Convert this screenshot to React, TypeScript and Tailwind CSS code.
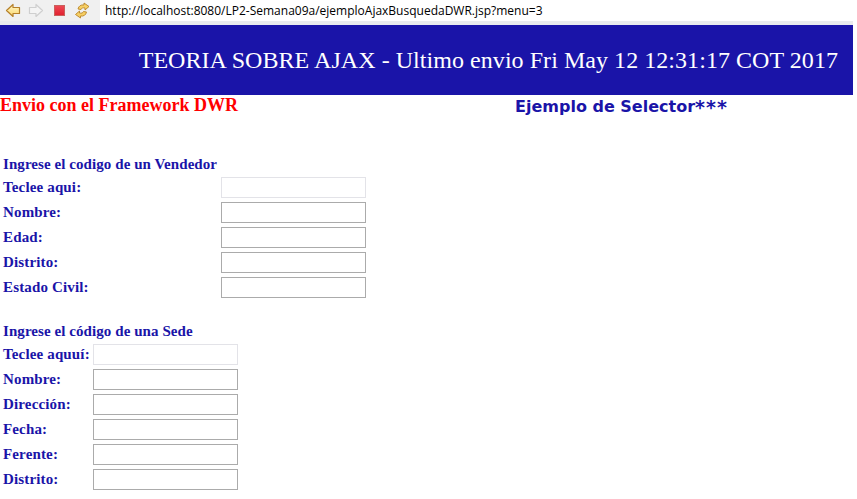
const serif = "font-['Liberation_Serif',serif]";

const vendedor = ["Teclee aqui:", "Nombre:", "Edad:", "Distrito:", "Estado Civil:"];
const sede = ["Teclee aquuí:", "Nombre:", "Dirección:", "Fecha:", "Ferente:", "Distrito:"];

function Toolbar() {
  return (
    <div className="flex h-[25px] items-start bg-[#f0f0f0] border-b-[4px] border-[#e9ebee]">
      <div className="flex h-[21px] w-[100px] items-center">
        <svg width="100" height="21" viewBox="0 0 100 21">
          <defs>
            <linearGradient id="back" x1="0" y1="0" x2="0" y2="1">
              <stop offset="0" stopColor="#fff6c8" />
              <stop offset="1" stopColor="#fbd86e" />
            </linearGradient>
            <linearGradient id="stop" x1="0" y1="0" x2="0" y2="1">
              <stop offset="0" stopColor="#ee4a55" />
              <stop offset="1" stopColor="#e0202e" />
            </linearGradient>
          </defs>
          <path d="M6.5 10.5 L13 4.5 V7.5 H19.5 V13.5 H13 V16.5 Z" fill="url(#back)" stroke="#b5802a" strokeWidth="1.2" strokeLinejoin="round" />
          <path d="M42.5 10.5 L36 4.5 V7.5 H29.5 V13.5 H36 V16.5 Z" fill="#f4f4f4" stroke="#cfcfcf" strokeWidth="1.2" strokeLinejoin="round" />
          <rect x="54.5" y="5.5" width="10" height="10" fill="url(#stop)" stroke="#c9605c" />
          <path d="M78 9 C78.5 6 81 4.5 84 5 L84 3 L89 6.5 L85 10 L85 8 C83 7.5 81.5 8 81 9.5 Z" fill="#f7cf63" stroke="#b98628" strokeWidth="0.9" strokeLinejoin="round" />
          <path d="M86.5 12 C86 15 83.5 16.5 80.5 16 L80.5 18 L75.5 14.5 L79.5 11 L79.5 13 C81.5 13.5 83 13 83.5 11.5 Z" fill="#f7cf63" stroke="#b98628" strokeWidth="0.9" strokeLinejoin="round" />
        </svg>
      </div>
      <div className="flex h-[21px] w-[753px] items-center bg-white pl-[5px] font-['Open_Sans',sans-serif] text-[12px] text-black">
        http://localhost:8080/LP2-Semana09a/ejemploAjaxBusquedaDWR.jsp?menu=3
      </div>
    </div>
  );
}

function Row({ label, labelWidth, first }: { label: string; labelWidth: string; first: boolean }) {
  return (
    <div className="flex h-[25px] items-center">
      <span className={`${labelWidth} pl-[3px] text-[15px] font-bold tracking-[0.15px] text-[#1a14a8]`}>{label}</span>
      <input
        type="text"
        readOnly
        className={`h-[21px] w-[145px] border bg-white ${first ? "border-[#e3e3e8]" : "border-[#ababab]"}`}
      />
    </div>
  );
}

export default function App() {
  return (
    <div className={`h-[499px] w-[857px] overflow-hidden bg-white ${serif}`}>
      <div className="w-[853px]">
        <Toolbar />
        <div className="flex h-[70px] items-center justify-end bg-[#1a14a8] pr-[15px] text-[24px] tracking-[0.05px] text-white">
          TEORIA SOBRE AJAX - Ultimo envio Fri May 12 12:31:17 COT 2017
        </div>
        <div className="flex h-[21px] items-center">
          <span className="mb-[2px] w-[515px] text-[18px] font-bold leading-none text-[#ff0000]">Envio con el Framework DWR</span>
          <span className="mt-[3px] font-['DejaVu_Sans',sans-serif] text-[16px] font-bold leading-none text-[#1a14a8]">
            Ejemplo de Selector<span className="align-[-2px] text-[19px] tracking-[1px]">***</span>
          </span>
        </div>
        <div className="mt-[40px] pl-[3px] text-[15px] font-bold leading-[16px] tracking-[0.07px] text-[#1a14a8]">Ingrese el codigo de un Vendedor</div>
        <div className="mt-[3px]">
          {vendedor.map((label, i) => (
            <Row key={label} label={label} labelWidth="w-[221px]" first={i === 0} />
          ))}
        </div>
        <div className="mt-[23px] pl-[3px] text-[15px] font-bold leading-[16px] tracking-[0.07px] text-[#1a14a8]">Ingrese el código de una Sede</div>
        <div className="mt-[3px]">
          {sede.map((label, i) => (
            <Row key={label} label={label} labelWidth="w-[93px]" first={i === 0} />
          ))}
        </div>
      </div>
    </div>
  );
}
